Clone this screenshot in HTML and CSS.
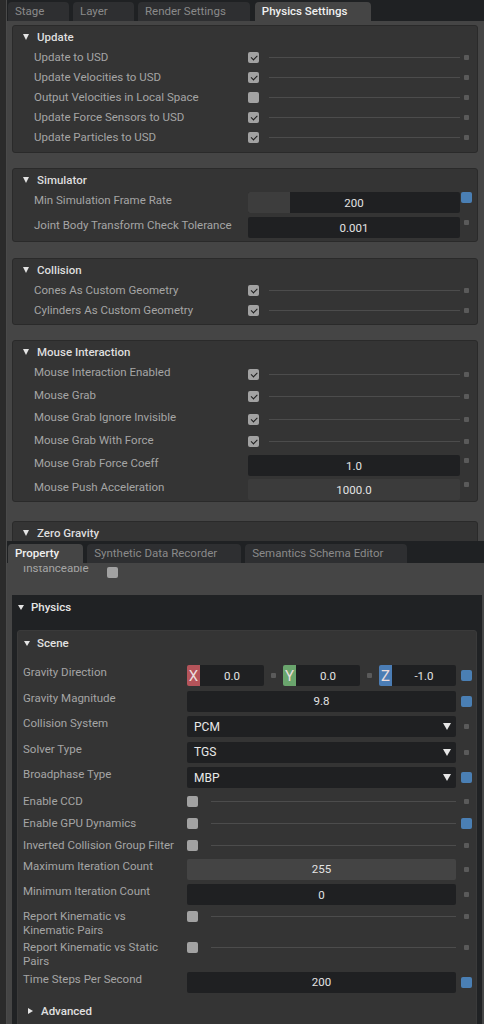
FILE: index.html
```html
<!DOCTYPE html>
<html lang="en">
<head>
<meta charset="utf-8">
<title>Physics Settings</title>
<link rel="stylesheet" href="styles.css">
</head>
<body>
<div class="edge"></div>
<div class="main">
  <section class="panel panel-top">
    <nav class="tabbar">
      <div class="tab">Stage</div>
      <div class="tab">Layer</div>
      <div class="tab">Render Settings</div>
      <div class="tab active">Physics Settings</div>
    </nav>
    <div class="content settings">
      <div class="frame">
        <div class="fhead"><span class="tri"></span>Update</div>
        <div class="rows pb5">
          <div class="crow"><span class="lbl">Update to USD</span><span class="cbox on"></span><span class="track"></span><span class="slot"><span class="dot"></span></span></div>
          <div class="crow"><span class="lbl">Update Velocities to USD</span><span class="cbox on"></span><span class="track"></span><span class="slot"><span class="dot"></span></span></div>
          <div class="crow"><span class="lbl">Output Velocities in Local Space</span><span class="cbox"></span><span class="track"></span><span class="slot"><span class="dot"></span></span></div>
          <div class="crow"><span class="lbl">Update Force Sensors to USD</span><span class="cbox on"></span><span class="track"></span><span class="slot"><span class="dot"></span></span></div>
          <div class="crow"><span class="lbl">Update Particles to USD</span><span class="cbox on"></span><span class="track"></span><span class="slot"><span class="dot"></span></span></div>
        </div>
      </div>

      <div class="frame">
        <div class="fhead"><span class="tri"></span>Simulator</div>
        <div class="rows pb1">
          <div class="vrow"><span class="lbl">Min Simulation Frame Rate</span><div class="field"><span class="fill" style="width:19.7%"></span><span class="val">200</span></div><span class="slot"><span class="blue"></span></span></div>
          <div class="vrow"><span class="lbl">Joint Body Transform Check Tolerance</span><div class="field"><span class="val">0.001</span></div><span class="slot"><span class="dot"></span></span></div>
        </div>
      </div>

      <div class="frame shift1">
        <div class="fhead"><span class="tri"></span>Collision</div>
        <div class="rows pb4">
          <div class="crow"><span class="lbl">Cones As Custom Geometry</span><span class="cbox on"></span><span class="track"></span><span class="slot"><span class="dot"></span></span></div>
          <div class="crow"><span class="lbl">Cylinders As Custom Geometry</span><span class="cbox on"></span><span class="track"></span><span class="slot"><span class="dot"></span></span></div>
        </div>
      </div>

      <div class="frame">
        <div class="fhead tall"><span class="tri"></span>Mouse Interaction</div>
        <div class="rows">
          <div class="crow h22"><span class="lbl up">Mouse Interaction Enabled</span><span class="cbox on"></span><span class="track"></span><span class="slot"><span class="dot"></span></span></div>
          <div class="crow h22"><span class="lbl up">Mouse Grab</span><span class="cbox on"></span><span class="track"></span><span class="slot"><span class="dot"></span></span></div>
          <div class="crow h22"><span class="lbl up">Mouse Grab Ignore Invisible</span><span class="cbox on"></span><span class="track"></span><span class="slot"><span class="dot"></span></span></div>
          <div class="crow h22"><span class="lbl up">Mouse Grab With Force</span><span class="cbox on"></span><span class="track"></span><span class="slot"><span class="dot"></span></span></div>
          <div class="vrow h24"><span class="lbl">Mouse Grab Force Coeff</span><div class="field"><span class="val">1.0</span></div><span class="slot"><span class="dot"></span></span></div>
          <div class="vrow h24"><span class="lbl">Mouse Push Acceleration</span><div class="field lite"><span class="val">1000.0</span></div><span class="slot"><span class="dot"></span></span></div>
        </div>
      </div>

      <div class="frame zero">
        <div class="fhead tall"><span class="tri"></span>Zero Gravity</div>
      </div>
    </div>
  </section>

  <section class="panel panel-bottom">
    <nav class="tabbar">
      <div class="tab active">Property</div>
      <div class="tab">Synthetic Data Recorder</div>
      <div class="tab">Semantics Schema Editor</div>
    </nav>
    <div class="content property">
      <div class="scroll">
        <div class="inst"><span class="lbl">Instanceable</span><span class="cbox"></span></div>

        <div class="physics">
          <div class="phead"><span class="tri sm"></span>Physics</div>
          <div class="scene">
            <div class="shead"><span class="tri sm"></span>Scene</div>
            <div class="srows">
              <div class="svrow"><span class="lbl">Gravity Direction</span>
                <div class="vec">
                  <div class="seg"><span class="axis ax-x">X</span><span class="num">0.0</span></div>
                  <span class="vgap"><span class="dot"></span></span>
                  <div class="seg"><span class="axis ax-y">Y</span><span class="num">0.0</span></div>
                  <span class="vgap"><span class="dot"></span></span>
                  <div class="seg"><span class="axis ax-z">Z</span><span class="num">-1.0</span></div>
                </div>
                <span class="slot"><span class="blue"></span></span>
              </div>
              <div class="svrow"><span class="lbl">Gravity Magnitude</span><div class="field"><span class="val">9.8</span></div><span class="slot"><span class="blue"></span></span></div>
              <div class="svrow"><span class="lbl">Collision System</span><div class="combo"><span>PCM</span><span class="caret"></span></div><span class="slot"><span class="dot"></span></span></div>
              <div class="svrow"><span class="lbl">Solver Type</span><div class="combo"><span>TGS</span><span class="caret"></span></div><span class="slot"><span class="dot"></span></span></div>
              <div class="svrow"><span class="lbl">Broadphase Type</span><div class="combo"><span>MBP</span><span class="caret"></span></div><span class="slot"><span class="blue"></span></span></div>
              <div class="scrow"><span class="lbl">Enable CCD</span><div class="ctl"><span class="cbox"></span><span class="track"></span><span class="slot"><span class="dot"></span></span></div></div>
              <div class="scrow"><span class="lbl">Enable GPU Dynamics</span><div class="ctl"><span class="cbox"></span><span class="track"></span><span class="slot"><span class="blue"></span></span></div></div>
              <div class="scrow"><span class="lbl">Inverted Collision Group Filter</span><div class="ctl"><span class="cbox"></span><span class="track"></span><span class="slot"><span class="dot"></span></span></div></div>
              <div class="svrow"><span class="lbl">Maximum Iteration Count</span><div class="field hover"><span class="val">255</span></div><span class="slot"><span class="dot"></span></span></div>
              <div class="svrow"><span class="lbl">Minimum Iteration Count</span><div class="field"><span class="val">0</span></div><span class="slot"><span class="dot"></span></span></div>
              <div class="scrow two"><span class="lbl">Report Kinematic vs<br>Kinematic Pairs</span><div class="ctl"><span class="cbox"></span><span class="track"></span><span class="slot"><span class="dot"></span></span></div></div>
              <div class="scrow two"><span class="lbl">Report Kinematic vs Static<br>Pairs</span><div class="ctl"><span class="cbox"></span><span class="track"></span><span class="slot"><span class="dot"></span></span></div></div>
              <div class="svrow"><span class="lbl">Time Steps Per Second</span><div class="field"><span class="val">200</span></div><span class="slot"><span class="blue"></span></span></div>
              <div class="adv"><span class="tri right"></span>Advanced</div>
            </div>
          </div>
        </div>
      </div>
    </div>
  </section>
</div>
</body>
</html>
```

FILE: styles.css
```css
* { box-sizing: border-box; margin: 0; padding: 0; }

body {
  width: 484px;
  height: 1024px;
  overflow: hidden;
  display: flex;
  background: #1f2123;
  font-family: Roboto, "Noto Sans", sans-serif;
  font-size: 11.5px;
  line-height: 14px;
  color: #a5a5a5;
}

.edge {
  flex: none;
  width: 7px;
  background: #2b2b2b;
  border-right: 1px solid #4a4a4a;
}

.main {
  flex: 1;
  min-width: 0;
  display: flex;
  flex-direction: column;
}

.panel { display: flex; flex-direction: column; overflow: hidden; }
.panel-top { flex: none; height: 541px; }
.panel-bottom { flex: 1; min-height: 0; }

.tabbar {
  flex: none;
  display: flex;
  align-items: flex-end;
  gap: 4px;
  padding-left: 1px;
  background: #1f2123;
}
.panel-top .tabbar { height: 21px; }
.panel-bottom .tabbar { height: 22px; }

.tab {
  min-width: 61px;
  height: 19px;
  line-height: 19px;
  padding: 0 24px 0 7px;
  border-radius: 4px 4px 0 0;
  background: #2e2f31;
  color: #8a8a8a;
  white-space: nowrap;
}
.tab.active { background: #454545; color: #f0f0f0; font-weight: 500; }
.tab + .tab.active { margin-left: 1px; }

.content { flex: 1; min-height: 0; background: #454545; overflow: hidden; }

/* ---------- Physics settings (top) ---------- */
.settings {
  display: flex;
  flex-direction: column;
  gap: 15px;
  padding: 4px 6px 0 5px;
}

.frame {
  flex: none;
  background: #343434;
  border: 1px solid #2a2a2a;
  border-radius: 3px;
}
.frame.shift1 { margin-top: 1px; }
.frame.zero { margin-top: 4px; }

.fhead {
  display: flex;
  align-items: center;
  height: 21px;
  padding-left: 10px;
  color: #dedede;
  font-weight: 500;
}
.fhead.tall { height: 22px; }

.tri {
  flex: none;
  width: 0;
  height: 0;
  border-left: 3.5px solid transparent;
  border-right: 3.5px solid transparent;
  border-top: 6px solid #e4e4e4;
  margin-right: 8px;
}
.tri.sm {
  border-left-width: 3px;
  border-right-width: 3px;
  border-top-width: 5px;
  margin-right: 7px;
}
.tri.right {
  border-top: 3px solid transparent;
  border-bottom: 3px solid transparent;
  border-left: 5px solid #e4e4e4;
  border-right: 0;
  margin-right: 8px;
}

.rows { display: flex; flex-direction: column; padding: 0 4px 0 21px; }
.rows.pb5 { padding-bottom: 5px; }
.rows.pb4 { padding-bottom: 4px; }
.rows.pb1 { padding-bottom: 1px; }

.lbl { flex: none; width: 214px; white-space: nowrap; }
.lbl.up { margin-bottom: 4px; }

.crow { display: flex; align-items: center; height: 20px; }
.crow.h22 { height: 22.5px; }

.cbox {
  flex: none;
  width: 11px;
  height: 11px;
  border-radius: 2px;
  background: #a2a2a2;
  display: flex;
  align-items: center;
  justify-content: center;
}
.cbox.on::after {
  content: "";
  width: 5px;
  height: 2.5px;
  border-left: 1.6px solid #1d1d1d;
  border-bottom: 1.6px solid #1d1d1d;
  transform: rotate(-45deg);
  margin-top: -1.5px;
}

.track { flex: 1; height: 1px; background: #4c4c4c; margin-left: 10px; }

.slot {
  flex: none;
  width: 13px;
  display: flex;
  justify-content: center;
  align-items: center;
}
.dot { width: 5px; height: 5px; border-radius: 1px; background: #5a5a5a; }
.blue { width: 11px; height: 11px; border-radius: 2px; background: #4a7fb4; }

.vrow { display: flex; align-items: flex-start; height: 25px; padding-top: 2px; }
.vrow.h24 { height: 24px; }
.vrow .lbl { line-height: 16px; }
.vrow .slot { height: 11px; }

.field {
  flex: 1;
  height: 21px;
  display: grid;
  border-radius: 2px;
  background: #1f2022;
  color: #e3e3e3;
}
.field > * { grid-area: 1 / 1; }
.val { align-self: center; justify-self: center; }
.fill { justify-self: start; background: #3d3d3d; border-radius: 2px 0 0 2px; }
.field.lite { background: #3b3b3b; }
.field.hover { background: #444444; }

/* ---------- Property (bottom) ---------- */
.property { display: flex; flex-direction: column; padding-top: 3px; }
.scroll { flex: 1; min-height: 0; overflow: hidden; }

.inst {
  display: flex;
  align-items: flex-start;
  height: 16px;
  margin-top: -5px;
  padding-left: 16px;
}
.inst .lbl { width: 84px; }
.inst .cbox { margin-top: 6px; }

.physics {
  margin: 18px 2px 0 5px;
  padding: 0 5px 40px;
  background: #202224;
}
.phead {
  display: flex;
  align-items: center;
  height: 24px;
  padding-left: 1px;
  color: #e6e6e6;
  font-weight: 500;
}

.scene {
  margin-top: 11px;
  background: #343434;
  border: 1px solid #3a3a3a;
  border-radius: 3px;
  padding-bottom: 40px;
}
.shead {
  display: flex;
  align-items: center;
  height: 24px;
  padding-left: 6px;
  color: #e2e2e2;
  font-weight: 500;
}
.srows { display: flex; flex-direction: column; padding: 7px 3px 0 5px; }
.srows .lbl { width: 164px; }
.srows .slot { margin-left: 4px; }

.svrow { display: flex; align-items: flex-start; height: 25.5px; padding-top: 3px; }
.svrow .lbl { line-height: 15px; }
.svrow .slot { height: 21px; }

.scrow { display: flex; align-items: center; height: 22px; }
.scrow .ctl { margin-top: 2px; }
.scrow.two { align-items: flex-start; height: 31px; padding-top: 3.5px; }
.scrow.two .lbl { line-height: 13.5px; }
.scrow.two .ctl { margin-top: 0.75px; }

.ctl { flex: 1; display: flex; align-items: center; height: 11px; }
.ctl .track { margin-left: 13px; }

.vec { flex: 1; display: flex; height: 21px; }
.seg { flex: 1; display: flex; height: 21px; }
.axis {
  flex: none;
  width: 13px;
  display: flex;
  align-items: center;
  justify-content: center;
  font-size: 15px;
  color: #eadcdc;
  border-radius: 2px 0 0 2px;
}
.ax-x { background: #b5545a; }
.ax-y { background: #6aa56d; }
.ax-z { background: #4b7db5; }
.num {
  flex: 1;
  display: flex;
  align-items: center;
  justify-content: center;
  background: #1f2022;
  color: #e3e3e3;
  border-radius: 0 2px 2px 0;
}
.vgap { flex: none; width: 19px; display: flex; align-items: center; justify-content: center; }

.combo {
  flex: 1;
  height: 21px;
  display: flex;
  align-items: center;
  justify-content: space-between;
  padding: 0 5px 0 7px;
  border-radius: 2px;
  background: #1f2022;
  color: #e8e8e8;
  font-size: 12px;
}
.caret {
  width: 0;
  height: 0;
  border-left: 4.5px solid transparent;
  border-right: 4.5px solid transparent;
  border-top: 7px solid #e6e6e6;
}

.adv {
  display: flex;
  align-items: center;
  height: 24px;
  margin-top: 4.5px;
  padding-left: 5px;
  color: #e0e0e0;
  font-weight: 500;
}
```
